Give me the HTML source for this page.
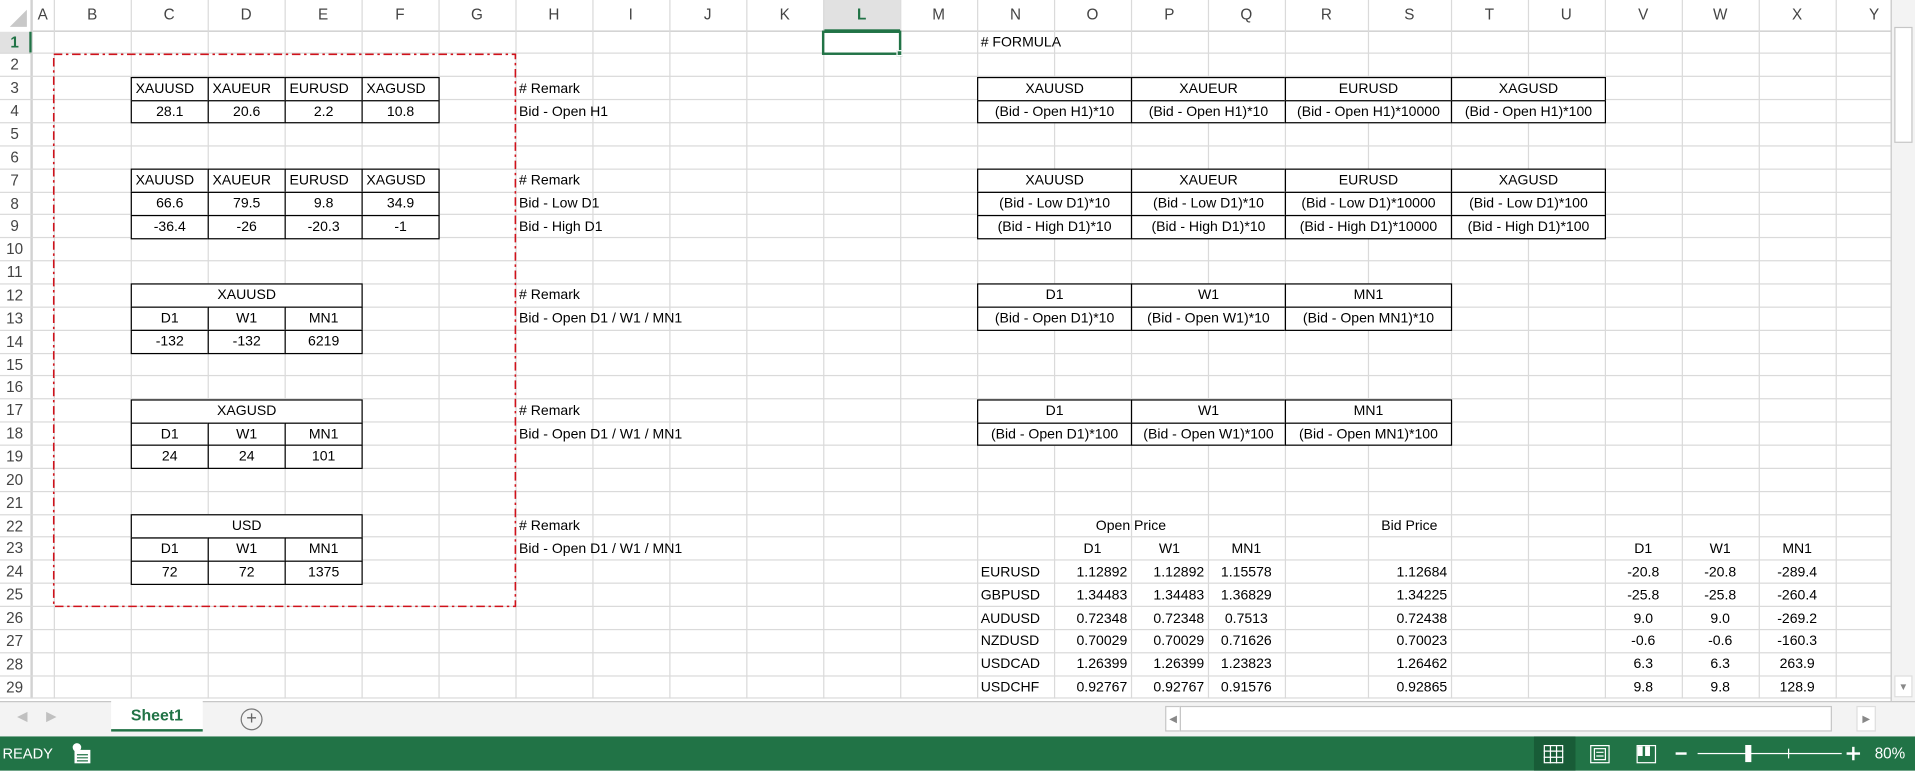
<!DOCTYPE html>
<html><head><meta charset="utf-8">
<style>
html,body{margin:0;padding:0;width:1915px;height:771px;overflow:hidden;background:#fff}
#w{position:absolute;left:0;top:0;width:1568px;height:631px;transform:scale(1.2213);transform-origin:0 0;font-family:"Liberation Sans",sans-serif;font-size:11.5px;color:#000;background:#fff}
.a{position:absolute;box-sizing:border-box;white-space:nowrap;overflow:visible;line-height:19px}
.c{line-height:21px}
.vl{position:absolute;width:1px;background:#dadada}
.hl{position:absolute;height:1px;background:#dadada}
.hd{position:absolute;text-align:center;color:#444;font-size:12.5px}
</style></head><body><div id="w"></div>
<script>
var W=document.getElementById('w');
var E=[26,44,107,170,233,296,359,422,485,548,611,674,737,800,863,926,989,1052,1120,1188,1251,1314,1377,1440,1503,1566];
var L="ABCDEFGHIJKLMNOPQRSTUVWXY";
var T=25.5,RH=18.86,GB=572;
var h='';
function ry(r){return T+(r-1)*RH;}
h+='<div class="a" style="left:0;top:0;width:1548px;height:25.5px;background:#fff;border-bottom:1px solid #c6c6c6"></div>';
h+='<div class="a" style="left:0;top:0;width:26px;height:'+GB+'px;background:#fff;border-right:1px solid #c6c6c6"></div>';
h+='<div class="a" style="left:674px;top:0;width:63px;height:25.5px;background:#e1e1e1;border-bottom:2px solid #217346"></div>';
h+='<div class="a" style="left:0;top:'+T+'px;width:26px;height:'+RH+'px;background:#e1e1e1;border-right:2px solid #217346"></div>';
h+='<svg style="position:absolute;left:0;top:0" width="26" height="25"><polygon points="22,8 22,22 8,22" fill="#c8c8c8"/></svg>';
for(var i=0;i<E.length;i++){h+='<div class="vl" style="left:'+E[i]+'px;top:0;height:'+GB+'px"></div>';}
for(var i=0;i<25;i++){var x=E[i],x2=E[i+1];h+='<div class="hd" style="left:'+x+'px;top:5px;width:'+(x2-x)+'px;'+(i==11?'color:#217346;font-weight:bold':'')+'">'+L[i]+'</div>';}
for(var r=1;r<=29;r++){var y=ry(r);h+='<div class="hl" style="left:0;top:'+(y+RH-1)+'px;width:1548px"></div>';h+='<div class="hd" style="left:0;top:'+(y+2)+'px;width:24px;'+(r==1?'color:#217346;font-weight:bold':'')+'">'+r+'</div>';}
function ci(c){return L.indexOf(c);}
function cell(c1,c2,r,t,al,b){var x=E[ci(c1)],x2=E[ci(c2)+1],y=ry(r);
h+='<div class="a c" style="left:'+x+'px;top:'+(y-0.5)+'px;width:'+(x2-x+(b?1:0))+'px;height:'+(RH+(b?1:0))+'px;text-align:'+(al||'left')+';padding:0 3px;'+(b?'border:1px solid #000;background:#fff;line-height:19.5px;':'')+'">'+t+'</div>';}
function row(cols,r,vals,al,b){for(var i=0;i<vals.length;i++)cell(cols[i][0],cols[i][1],r,vals[i],al,b);}
var CF=[['C','C'],['D','D'],['E','E'],['F','F']];
row(CF,3,['XAUUSD','XAUEUR','EURUSD','XAGUSD'],'left',1);
row(CF,4,['28.1','20.6','2.2','10.8'],'center',1);
row(CF,7,['XAUUSD','XAUEUR','EURUSD','XAGUSD'],'left',1);
row(CF,8,['66.6','79.5','9.8','34.9'],'center',1);
row(CF,9,['-36.4','-26','-20.3','-1'],'center',1);
var CE=[['C','C'],['D','D'],['E','E']];
[[12,'XAUUSD',['-132','-132','6219']],[17,'XAGUSD',['24','24','101']],[22,'USD',['72','72','1375']]].forEach(function(b){
cell('C','E',b[0],b[1],'center',1);row(CE,b[0]+1,['D1','W1','MN1'],'center',1);row(CE,b[0]+2,b[2],'center',1);
cell('H','H',b[0],'# Remark');cell('H','H',b[0]+1,'Bid - Open D1 / W1 / MN1');});
cell('H','H',3,'# Remark');cell('H','H',4,'Bid - Open H1');
cell('H','H',7,'# Remark');cell('H','H',8,'Bid - Low D1');cell('H','H',9,'Bid - High D1');
cell('N','N',1,'# FORMULA');
var RB=[['N','O'],['P','Q'],['R','S'],['T','U']];
row(RB,3,['XAUUSD','XAUEUR','EURUSD','XAGUSD'],'center',1);
row(RB,4,['(Bid - Open H1)*10','(Bid - Open H1)*10','(Bid - Open H1)*10000','(Bid - Open H1)*100'],'center',1);
row(RB,7,['XAUUSD','XAUEUR','EURUSD','XAGUSD'],'center',1);
row(RB,8,['(Bid - Low D1)*10','(Bid - Low D1)*10','(Bid - Low D1)*10000','(Bid - Low D1)*100'],'center',1);
row(RB,9,['(Bid - High D1)*10','(Bid - High D1)*10','(Bid - High D1)*10000','(Bid - High D1)*100'],'center',1);
var R3=[['N','O'],['P','Q'],['R','S']];
row(R3,12,['D1','W1','MN1'],'center',1);
row(R3,13,['(Bid - Open D1)*10','(Bid - Open W1)*10','(Bid - Open MN1)*10'],'center',1);
row(R3,17,['D1','W1','MN1'],'center',1);
row(R3,18,['(Bid - Open D1)*100','(Bid - Open W1)*100','(Bid - Open MN1)*100'],'center',1);
cell('O','P',22,'Open Price','center');cell('S','S',22,'Bid Price','center');
row([['O','O'],['P','P'],['Q','Q']],23,['D1','W1','MN1'],'center');
row([['V','V'],['W','W'],['X','X']],23,['D1','W1','MN1'],'center');
var D=[['EURUSD','1.12892','1.12892','1.15578','1.12684','-20.8','-20.8','-289.4'],
['GBPUSD','1.34483','1.34483','1.36829','1.34225','-25.8','-25.8','-260.4'],
['AUDUSD','0.72348','0.72348','0.7513','0.72438','9.0','9.0','-269.2'],
['NZDUSD','0.70029','0.70029','0.71626','0.70023','-0.6','-0.6','-160.3'],
['USDCAD','1.26399','1.26399','1.23823','1.26462','6.3','6.3','263.9'],
['USDCHF','0.92767','0.92767','0.91576','0.92865','9.8','9.8','128.9']];
D.forEach(function(d,i){var r=24+i;cell('N','N',r,d[0]);
cell('O','O',r,d[1],'right');cell('P','P',r,d[2],'right');cell('Q','Q',r,d[3],'center');cell('S','S',r,d[4],'right');
cell('V','V',r,d[5],'center');cell('W','W',r,d[6],'center');cell('X','X',r,d[7],'center');});
h+='<div class="a" style="left:673px;top:'+(T-1)+'px;width:65px;height:'+(RH+1.5)+'px;border:2px solid #217346"></div>';
h+='<div class="a" style="left:734px;top:'+(T+RH-3.5)+'px;width:5px;height:5px;background:#217346;border:1px solid #fff"></div>';
h+='<svg style="position:absolute;left:0;top:0" width="1568" height="631"><rect x="44" y="44.5" width="378" height="452" fill="none" stroke="#d0121b" stroke-width="1.3" stroke-dasharray="7,3,2,3"/></svg>';
h+='<div class="a" style="left:1548px;top:0;width:20px;height:575px;background:#f3f3f3;border-left:1px solid #c6c6c6"></div>';
h+='<div class="a" style="left:1551px;top:22px;width:15px;height:95px;background:#fff;border:1px solid #c6c6c6"></div>';
h+='<div class="a" style="left:1551px;top:553px;width:15px;height:18px;background:#fff;border:1px solid #ddd;color:#888;font-size:8px;text-align:center;line-height:18px">&#9660;</div>';
h+='<div class="a" style="left:0;top:574px;width:1568px;height:29px;background:#f3f3f3;border-top:1px solid #c6c6c6"></div>';
h+='<div class="a" style="left:14px;top:578px;color:#c0c0c0;font-size:11px">&#9664;&nbsp;&nbsp;&nbsp;&nbsp;&nbsp;&#9654;</div>';
h+='<div class="a" style="left:91px;top:573px;width:75px;height:26px;background:#fff;border-bottom:2px solid #217346;color:#217346;font-weight:bold;font-size:13px;text-align:center;line-height:26px">Sheet1</div>';
h+='<div class="a" style="left:197px;top:580px;width:18px;height:18px;border:1px solid #777;border-radius:50%;color:#666;text-align:center;line-height:16px;font-size:15px">+</div>';
h+='<div class="a" style="left:954px;top:578px;width:13px;height:21px;background:#fff;border:1px solid #c6c6c6;color:#888;font-size:8px;text-align:center;line-height:20px">&#9664;</div>';
h+='<div class="a" style="left:966px;top:578px;width:534px;height:21px;background:#fff;border:1px solid #c6c6c6"></div>';
h+='<div class="a" style="left:1520px;top:578px;width:16px;height:21px;background:#fff;border:1px solid #ddd;color:#888;font-size:8px;text-align:center;line-height:20px">&#9654;</div>';
h+='<div class="a" style="left:0;top:603px;width:1568px;height:28px;background:#217346;color:#fff;font-size:12px;line-height:28px;padding-left:2px">READY</div>';
h+='<svg style="position:absolute;left:58px;top:608px" width="18" height="18"><circle cx="5" cy="4" r="3.5" fill="#fff"/><rect x="3" y="6" width="13" height="11" fill="#fff"/><g stroke="#217346" stroke-width="1"><line x1="5" y1="10" x2="14" y2="10"/><line x1="5" y1="12.5" x2="14" y2="12.5"/><line x1="5" y1="15" x2="14" y2="15"/></g></svg>';
h+='<div class="a" style="left:1256px;top:603px;width:34px;height:28px;background:#185c37"></div>';
h+='<svg style="position:absolute;left:1263px;top:609px" width="18" height="17"><g stroke="#fff" fill="none" stroke-width="1"><rect x="1.5" y="1.5" width="15" height="14"/><line x1="6.5" y1="1" x2="6.5" y2="16"/><line x1="11.5" y1="1" x2="11.5" y2="16"/><line x1="1" y1="6" x2="17" y2="6"/><line x1="1" y1="11" x2="17" y2="11"/></g></svg>';
h+='<svg style="position:absolute;left:1301px;top:609px" width="18" height="17"><g stroke="#fff" fill="none" stroke-width="1"><rect x="1.5" y="1.5" width="15" height="14"/><rect x="4.5" y="4" width="9" height="9"/><line x1="6" y1="7" x2="12" y2="7"/><line x1="6" y1="10" x2="12" y2="10"/></g></svg>';
h+='<svg style="position:absolute;left:1339px;top:609px" width="18" height="17"><rect x="1.5" y="1.5" width="15" height="14" fill="none" stroke="#fff"/><rect x="2" y="2" width="4" height="8" fill="#fff"/><rect x="8" y="2" width="4" height="8" fill="#fff"/></svg>';
h+='<svg style="position:absolute;left:1368px;top:607px" width="160" height="20"><g fill="#fff"><rect x="4" y="9" width="9" height="2"/><rect x="22" y="9.5" width="118" height="1"/><rect x="61" y="3" width="5" height="14"/><rect x="96" y="6" width="1" height="8"/><rect x="144" y="9" width="11" height="2"/><rect x="148.5" y="4.5" width="2" height="11"/></g></svg>';
h+='<div class="a" style="left:1535px;top:603px;color:#fff;font-size:12.5px;line-height:28px">80%</div>';
W.innerHTML=h;
</script></body></html>
